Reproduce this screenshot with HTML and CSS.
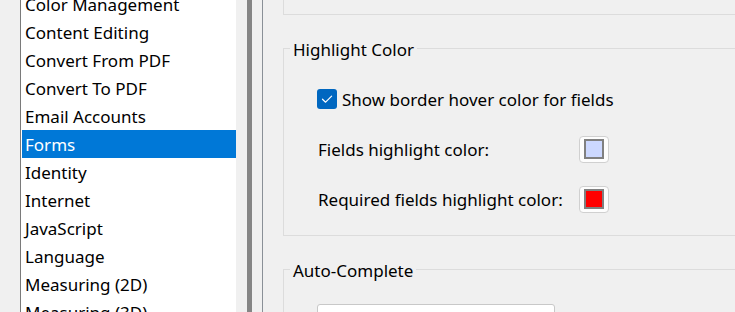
FILE: index.html
```html
<!DOCTYPE html>
<html>
<head>
<meta charset="utf-8">
<link rel="stylesheet" href="styles.css">
</head>
<body>
<div class="app">
  <div class="side">
    <div class="listbox">
      <ul class="items">
        <li>Color Management</li>
        <li>Content Editing</li>
        <li>Convert From PDF</li>
        <li>Convert To PDF</li>
        <li>Email Accounts</li>
        <li class="sel">Forms</li>
        <li>Identity</li>
        <li>Internet</li>
        <li>JavaScript</li>
        <li>Language</li>
        <li>Measuring (2D)</li>
        <li>Measuring (3D)</li>
      </ul>
      <div class="scroll"><div class="thumb"></div></div>
    </div>
  </div>
  <div class="main">
    <div class="prevgroup"></div>
    <fieldset class="group">
      <legend>Highlight Color</legend>
      <div class="rows">
        <div class="row check">
          <span class="cb"><svg width="20" height="20" viewBox="0 0 20 20"><path d="M5.5 10.2 L8.6 13.2 L14.6 7.2" fill="none" stroke="#fff" stroke-width="1.2" stroke-linecap="round" stroke-linejoin="round"/></svg></span>
          <span>Show border hover color for fields</span>
        </div>
        <div class="row">
          <span class="lbl">Fields highlight color:</span>
          <span class="swbtn"><span class="sw blue"></span></span>
        </div>
        <div class="row">
          <span class="lbl">Required fields highlight color:</span>
          <span class="swbtn"><span class="sw red"></span></span>
        </div>
      </div>
    </fieldset>
    <fieldset class="group ac">
      <legend>Auto-Complete</legend>
      <div class="field"></div>
    </fieldset>
  </div>
</div>
</body>
</html>
```
FILE: styles.css
```css
html, body {
  margin: 0;
  padding: 0;
  background: #f0f0f0;
  overflow: hidden;
}
body {
  font-family: "Noto Sans", "Open Sans", sans-serif;
  font-size: 17px;
  color: #000;
  width: 735px;
  height: 312px;
}
.app {
  display: flex;
  height: 312px;
}
.side {
  padding-left: 20px;
  height: 312px;
}
.listbox {
  display: flex;
  height: 312px;
  border-left: 1px solid #7a7a7a;
  border-right: 1px solid #8a9097;
  background: #fff;
  overflow: hidden;
}
.items {
  list-style: none;
  margin: -10px 0 0 0;
  padding: 0 0 0 1px;
  width: 214px;
}
.items li {
  height: 28px;
  line-height: 30px;
  padding-left: 3px;
  white-space: nowrap;
  overflow: hidden;
}
.items li.sel {
  background: #0078d7;
  color: #fff;
}
.scroll {
  width: 26px;
  background: #f0f0f0;
  display: flex;
  justify-content: center;
}
.thumb {
  width: 5px;
  background: #858585;
  height: 100%;
}
.main {
  flex: 1;
  padding-left: 20px;
  overflow: hidden;
}
.prevgroup {
  height: 14px;
  border-left: 1px solid #dcdcdc;
  border-bottom: 1px solid #dcdcdc;
  margin-bottom: 22px;
}
.group {
  margin: 0 0 22px 0;
  padding: 0 0 22px 6px;
  border: 1px solid #dcdcdc;
  border-right: none;
  min-width: 0;
}
.group legend {
  padding: 0 3px;
  height: 22px;
  line-height: 26px;
  font-size: 17px;
}
.rows {
  padding-top: 26px;
  padding-left: 27px;
  display: flex;
  flex-direction: column;
  gap: 22px;
}
.row {
  height: 28px;
  display: flex;
  align-items: center;
  white-space: nowrap;
}
.cb {
  width: 20px;
  height: 20px;
  border-radius: 3px;
  background: #0067c0;
  margin-right: 5px;
  display: block;
}
.cb svg { display: block; }
.lbl { width: 261px; padding-left: 1px; }
.swbtn {
  width: 28px;
  height: 25px;
  border: 1px solid #d0d0d0;
  border-radius: 4px;
  background: #fdfdfd;
  display: flex;
  align-items: center;
  justify-content: center;
}
.sw {
  width: 16px;
  height: 16px;
  border: 2px solid #808080;
  display: block;
}
.sw.blue { background: #ccd8ff; }
.sw.red { background: #ff0000; }
.ac { padding-bottom: 0; }
.field {
  margin-top: 24px;
  margin-left: 27px;
  width: 236px;
  height: 30px;
  background: #fff;
  border: 1px solid #c8c8c8;
  border-radius: 3px;
}
```
